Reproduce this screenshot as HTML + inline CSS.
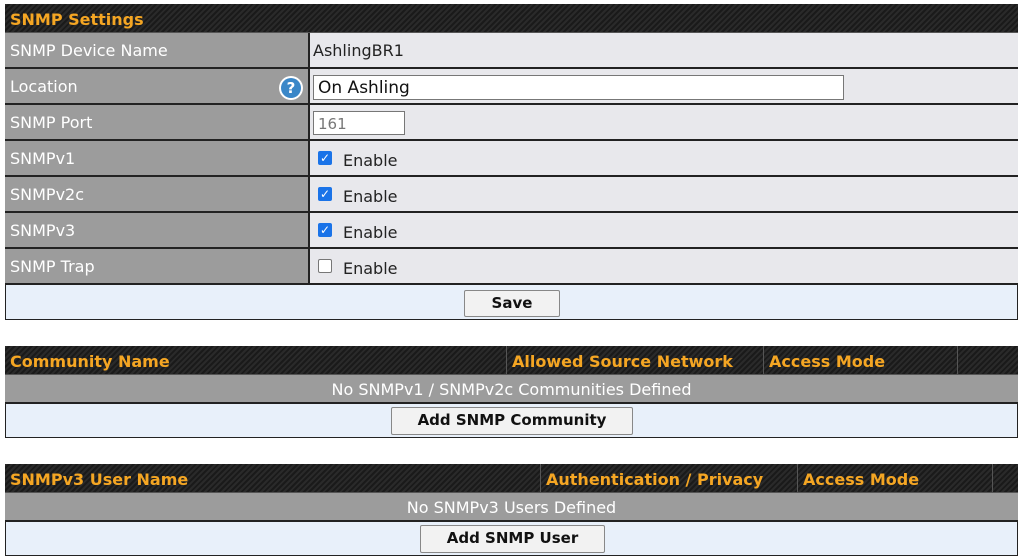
<html><head><style>
body{margin:0;width:1024px;height:560px;background:#fff;font-family:"DejaVu Sans","Liberation Sans",sans-serif;position:relative;overflow:hidden}
.a{position:absolute;box-sizing:border-box}
.hd{background:repeating-linear-gradient(135deg,#2a2a2a 0 2px,#1a1a1a 2px 4px);background-color:#222;color:#f5a623;font-weight:bold;font-size:16px;line-height:31px;padding-left:5px;border-bottom:1px solid #555}
.lb{background:#9c9c9c;color:#fff;font-size:16px;padding-left:5px;border-bottom:2px solid #222;border-right:2px solid #222}
.vl{background:#e8e8ec;color:#222;font-size:16px;padding-left:5px;border-bottom:2px solid #222}
.ft{background:#e8f0fa;border:1px solid #222;border-top:none}
.btn{position:absolute;background:#f2f2f2;border:1px solid #888;border-radius:2px;font-weight:bold;font-size:15px;text-align:center;line-height:25px;color:#111}
.gr{background:#9c9c9c;color:#fff;font-size:16px;text-align:center;line-height:29px;border-bottom:2px solid #222}
.cb{position:absolute;width:14px;height:14px;border-radius:2px;background:#1a73e8;left:318px;color:#fff;font-size:12px;font-weight:bold;line-height:14px;text-align:center}
.cb.u{background:#fff;border:1px solid #777;box-sizing:border-box}
.en{position:absolute;left:343px;font-size:16px;color:#222}
</style></head><body>
<div class="a hd" style="left:5px;top:4px;width:1013px;height:29px">SNMP Settings</div>
<div class="a lb" style="left:5px;top:33px;width:305px;height:36px;line-height:36px">SNMP Device Name</div>
<div class="a vl" style="left:310px;top:33px;width:708px;height:36px;line-height:36px;padding-left:3px">AshlingBR1</div>
<div class="a lb" style="left:5px;top:69px;width:305px;height:36px;line-height:36px">Location</div>
<div class="a" style="left:279px;top:76px;width:24px;height:24px;border-radius:50%;background:#fff"><div style="margin:2px;width:20px;height:20px;border-radius:50%;background:#3a87c8;color:#fff;font-weight:bold;font-size:15px;text-align:center;line-height:20px">?</div></div>
<div class="a vl" style="left:310px;top:69px;width:708px;height:36px"></div>
<div class="a" style="left:313px;top:75px;width:531px;height:25px;background:#fff;border:1px solid #777;font-size:17px;line-height:24px;padding-left:4px;color:#111">On Ashling</div>
<div class="a lb" style="left:5px;top:105px;width:305px;height:36px;line-height:36px">SNMP Port</div>
<div class="a vl" style="left:310px;top:105px;width:708px;height:36px"></div>
<div class="a" style="left:313px;top:111px;width:92px;height:24px;background:#fff;border:1px solid #777;font-size:15px;line-height:24px;padding-left:4px;color:#777">161</div>
<div class="a lb" style="left:5px;top:141px;width:305px;height:36px;line-height:36px">SNMPv1</div>
<div class="a vl" style="left:310px;top:141px;width:708px;height:36px"></div>
<div class="a lb" style="left:5px;top:177px;width:305px;height:36px;line-height:36px">SNMPv2c</div>
<div class="a vl" style="left:310px;top:177px;width:708px;height:36px"></div>
<div class="a lb" style="left:5px;top:213px;width:305px;height:36px;line-height:36px">SNMPv3</div>
<div class="a vl" style="left:310px;top:213px;width:708px;height:36px"></div>
<div class="a lb" style="left:5px;top:249px;width:305px;height:36px;line-height:36px">SNMP Trap</div>
<div class="a vl" style="left:310px;top:249px;width:708px;height:36px"></div>
<div class="cb" style="top:151px">✓</div><div class="en" style="top:151px">Enable</div>
<div class="cb" style="top:187px">✓</div><div class="en" style="top:187px">Enable</div>
<div class="cb" style="top:223px">✓</div><div class="en" style="top:223px">Enable</div>
<div class="cb u" style="top:259px"></div><div class="en" style="top:259px">Enable</div>
<div class="a ft" style="left:5px;top:285px;width:1013px;height:35px"></div>
<div class="btn" style="left:464px;top:290px;width:94px;height:25px">Save</div>

<div class="a hd" style="left:5px;top:346px;width:1013px;height:29px">Community Name</div>
<div class="a hd" style="left:506px;top:346px;width:257px;height:29px;border-left:1px solid #555;background:none">Allowed Source Network</div>
<div class="a hd" style="left:763px;top:346px;width:195px;height:29px;border-left:1px solid #555;border-right:1px solid #555;background:none">Access Mode</div>
<div class="a gr" style="left:5px;top:375px;width:1013px;height:29px">No SNMPv1 / SNMPv2c Communities Defined</div>
<div class="a ft" style="left:5px;top:404px;width:1013px;height:34px"></div>
<div class="btn" style="left:391px;top:407px;width:240px;height:26px">Add SNMP Community</div>

<div class="a hd" style="left:5px;top:464px;width:1013px;height:29px">SNMPv3 User Name</div>
<div class="a hd" style="left:540px;top:464px;width:257px;height:29px;border-left:1px solid #555;background:none">Authentication / Privacy</div>
<div class="a hd" style="left:797px;top:464px;width:196px;height:29px;border-left:1px solid #555;border-right:1px solid #555;background:none">Access Mode</div>
<div class="a gr" style="left:5px;top:493px;width:1013px;height:29px">No SNMPv3 Users Defined</div>
<div class="a ft" style="left:5px;top:522px;width:1013px;height:34px"></div>
<div class="btn" style="left:420px;top:525px;width:183px;height:26px">Add SNMP User</div>
</body></html>
